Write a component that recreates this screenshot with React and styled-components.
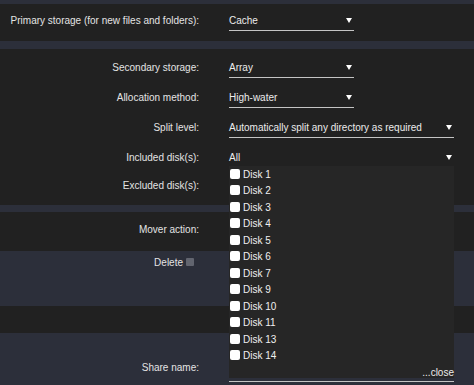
import React from "react";
import styled, { createGlobalStyle } from "styled-components";

const Global = createGlobalStyle`
  html, body { margin: 0; padding: 0; background: #2c2f3a; }
  body { font-family: "Liberation Sans", Arial, sans-serif; font-size: 10px; color: #e4e4e4; }
`;

const Page = styled.div`
  width: 474px;
  height: 385px;
  overflow: hidden;
  padding-top: 4px;
  box-sizing: border-box;
  background: #2c2f3a;
`;

const Section = styled.div`
  background: ${(p) => (p.$dark ? "#212121" : "transparent")};
  padding: ${(p) => p.$pad || "0"};
  margin-top: ${(p) => p.$gap || 0}px;
  height: ${(p) => (p.$h ? `${p.$h}px` : "auto")};
  box-sizing: border-box;
`;

const Row = styled.div`
  display: grid;
  grid-template-columns: 199px 1fr;
  column-gap: 30px;
  align-items: center;
  height: ${(p) => p.$h || 30}px;
`;

const Label = styled.div`
  text-align: right;
  white-space: nowrap;
  display: flex;
  justify-content: flex-end;
  align-items: center;
  gap: 3px;
  padding-right: ${(p) => p.$pr || 0}px;
`;

const Cell = styled.div`
  position: relative;
`;

const Select = styled.div`
  display: flex;
  align-items: center;
  justify-content: space-between;
  width: ${(p) => p.$w}px;
  height: 22px;
  box-sizing: border-box;
  padding: 1px 2px 0 0;
  border-bottom: 1px solid #c4c4c4;
  color: #ececec;
`;

const Arrow = styled.span`
  width: 0;
  height: 0;
  border-left: 3px solid transparent;
  border-right: 3px solid transparent;
  border-top: 5px solid #ffffff;
`;

const Input = styled.div`
  width: 225px;
  height: 24px;
  margin-top: 4px;
  border-bottom: 1px solid #c4c4c4;
`;

const Panel = styled.div`
  position: absolute;
  left: 0;
  top: 20px;
  width: 225px;
  background: #262626;
  z-index: 5;
`;

const Item = styled.label`
  display: flex;
  align-items: center;
  gap: 3px;
  height: 16.5px;
  padding-left: 1px;
  color: #f0f0f0;
`;

const Box = styled.span`
  width: 10px;
  height: 10px;
  border-radius: 2px;
  background: #ffffff;
  margin-top: -1px;
`;

const Close = styled.div`
  text-align: right;
  height: 13px;
  line-height: 15px;
  padding-top: 1px;
  color: #ececec;
`;

const SmallBox = styled.span`
  width: 8px;
  height: 8px;
  background: #62656f;
  border-radius: 1px;
`;

const disks = ["1", "2", "3", "4", "5", "6", "7", "9", "10", "11", "13", "14"];

function SelectField({ value, w }) {
  return (
    <Select $w={w}>
      <span>{value}</span>
      <Arrow />
    </Select>
  );
}

export default function App() {
  return (
    <>
      <Global />
      <Page>
        <Section $dark $pad="1px 0 6px">
          <Row>
            <Label>Primary storage (for new files and folders):</Label>
            <Cell>
              <SelectField value="Cache" w={125} />
            </Cell>
          </Row>
        </Section>
        <Section $dark $gap={8} $pad="3px 0 3px" $h={156}>
          <Row>
            <Label>Secondary storage:</Label>
            <Cell>
              <SelectField value="Array" w={125} />
            </Cell>
          </Row>
          <Row>
            <Label>Allocation method:</Label>
            <Cell>
              <SelectField value="High-water" w={125} />
            </Cell>
          </Row>
          <Row>
            <Label>Split level:</Label>
            <Cell>
              <SelectField value="Automatically split any directory as required" w={225} />
            </Cell>
          </Row>
          <Row>
            <Label>Included disk(s):</Label>
            <Cell>
              <SelectField value="All" w={225} />
              <Panel>
                {disks.map((d) => (
                  <Item key={d}>
                    <Box />
                    Disk {d}
                  </Item>
                ))}
                <Close>...close</Close>
              </Panel>
            </Cell>
          </Row>
          <Row $h={26}>
            <Label>Excluded disk(s):</Label>
            <Cell />
          </Row>
        </Section>
        <Section $dark $gap={7} $pad="2px 0 7px">
          <Row>
            <Label>Mover action:</Label>
            <Cell />
          </Row>
        </Section>
        <Section $h={55}>
          <Row $h={22}>
            <Label $pr={5}>
              Delete
              <SmallBox />
            </Label>
            <Cell />
          </Row>
        </Section>
        <Section $dark $h={27} />
        <Section $pad="19px 0 0">
          <Row>
            <Label>Share name:</Label>
            <Cell>
              <Input />
            </Cell>
          </Row>
        </Section>
      </Page>
    </>
  );
}
